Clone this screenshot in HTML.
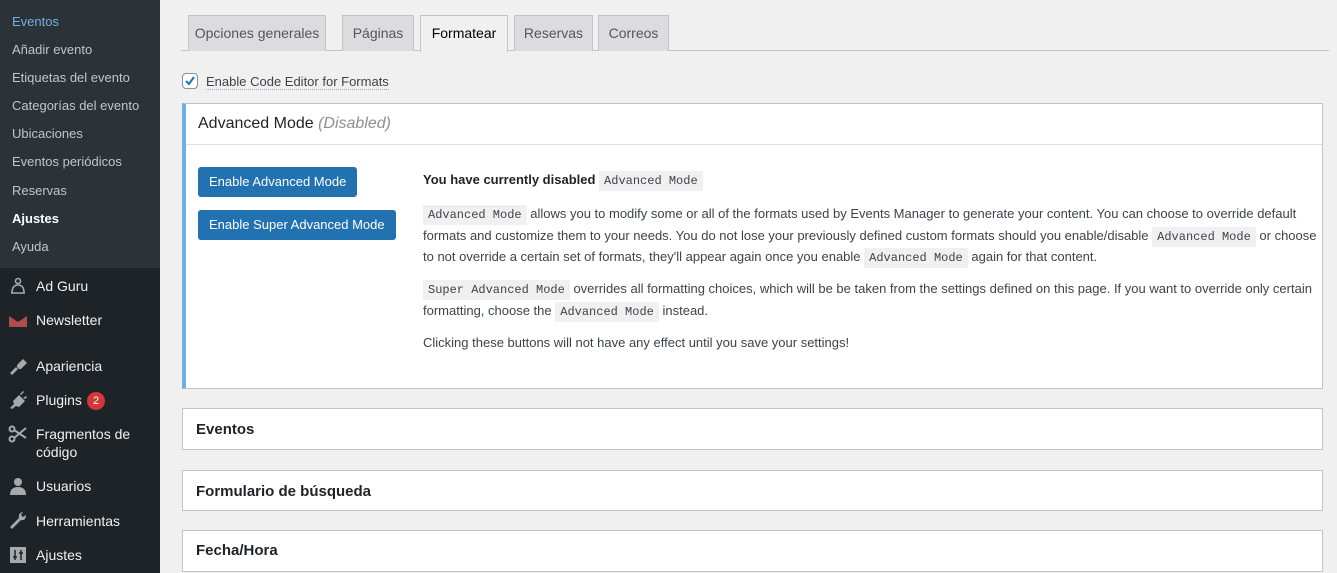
<!DOCTYPE html>
<html><head><meta charset="utf-8"><style>
*{box-sizing:border-box;margin:0;padding:0}
body{width:1337px;height:573px;overflow:hidden;background:#f0f0f1;font-family:"Liberation Sans",sans-serif;font-size:13px;color:#3c434a;position:relative}
#sb{position:absolute;left:0;top:0;width:160px;height:573px;background:#1d2327}
#sub{position:absolute;left:0;top:0;width:160px;height:268px;background:#2c3338}
.si{position:absolute;left:12px;color:#c3c4c7;font-size:13px;line-height:16px}
.mi{position:absolute;left:36px;color:#f0f0f1;font-size:14px;line-height:18px}
.ic{position:absolute;left:8px;width:20px;height:20px}
.tab{position:absolute;top:15px;height:36px;background:#dcdcde;border:1px solid #c3c4c7;border-bottom:none;font-size:14px;color:#50575e;text-align:center;line-height:34px}
.panel{position:absolute;left:182px;width:1141px;background:#fff;border:1px solid #c3c4c7}
.ph{position:absolute;left:13px;font-size:15px;font-weight:bold;color:#1d2327}
.btn{position:absolute;left:198px;height:30px;background:#2271b1;color:#fff;border-radius:3px;font-size:13px;line-height:30px;padding:0 11px}
code{font-family:"Liberation Mono",monospace;font-size:12px;background:#f0f0f1;padding:3px 5px;color:#3c434a}
.txt{position:absolute;left:423px;width:900px;line-height:20.5px;font-size:13px}
</style></head><body>
<div id="sb"><div id="sub"></div>
<div class="si" style="top:14px;color:#72aee6">Eventos</div>
<div class="si" style="top:42px">Añadir evento</div>
<div class="si" style="top:70px">Etiquetas del evento</div>
<div class="si" style="top:98px">Categorías del evento</div>
<div class="si" style="top:126px">Ubicaciones</div>
<div class="si" style="top:154px">Eventos periódicos</div>
<div class="si" style="top:183px">Reservas</div>
<div class="si" style="top:211px;color:#fff;font-weight:bold">Ajustes</div>
<div class="si" style="top:239px">Ayuda</div>
<svg class="ic" style="top:276px" viewBox="0 0 20 20" fill="none" stroke="#a7aaad" stroke-width="1.6"><circle cx="10" cy="5" r="2.5"/><path d="M4 17 Q4 9 10 9 Q16 9 16 17Z M3 17h14"/></svg>
<div class="mi" style="top:277px">Ad Guru</div>
<svg class="ic" style="top:311px" viewBox="0 0 20 20"><path d="M1 5 L10 11 L19 5 V16 H1Z" fill="#b24b4b"/></svg>
<div class="mi" style="top:311px">Newsletter</div>
<svg class="ic" style="top:356px" viewBox="0 0 20 20" fill="#a7aaad"><path d="M2 17 L8 11 L10 13 L4 19Z M9 9 L15 3 L19 7 L13 13 L11 13 L9 11Z"/></svg>
<div class="mi" style="top:357px">Apariencia</div>
<svg class="ic" style="top:390px" viewBox="0 0 20 20" fill="#a7aaad"><path d="M2 18 L6 14 L5 11 L11 5 L17 11 L11 17 L8 16 L4 19Z M12 4 L15 1 L16 2 L13 5Z M17 9 L19 7 L18 6 L15 8Z"/></svg>
<div class="mi" style="top:391px">Plugins</div>
<div style="position:absolute;left:87px;top:392px;width:18px;height:18px;border-radius:9px;background:#d63638;color:#fff;font-size:11px;text-align:center;line-height:18px">2</div>
<svg class="ic" style="top:424px" viewBox="0 0 20 20" fill="none" stroke="#a7aaad" stroke-width="2"><circle cx="4" cy="5" r="2.5"/><circle cx="4" cy="15" r="2.5"/><path d="M6 6 L18 14 M6 14 L18 4"/></svg>
<div class="mi" style="top:425px;line-height:18px">Fragmentos de<br>código</div>
<svg class="ic" style="top:476px" viewBox="0 0 20 20" fill="#a7aaad"><circle cx="10" cy="6" r="4"/><path d="M2 19 Q2 11 10 11 Q18 11 18 19Z"/></svg>
<div class="mi" style="top:477px">Usuarios</div>
<svg class="ic" style="top:511px" viewBox="0 0 20 20" fill="#a7aaad"><path d="M2 16 L11 7 Q10 2 15 1 L13 4 L15 6 L18 4 Q18 10 13 9 L4 18Z"/></svg>
<div class="mi" style="top:512px">Herramientas</div>
<svg class="ic" style="top:545px" viewBox="0 0 20 20"><rect x="2" y="2" width="16" height="16" fill="#a7aaad"/><path d="M7 5v10M13 5v10M5 12h4M11 8h4" stroke="#1d2327" stroke-width="1.5"/></svg>
<div class="mi" style="top:546px">Ajustes</div>
</div>

<div style="position:absolute;left:181px;top:50px;width:1148px;height:1px;background:#c3c4c7"></div>
<div class="tab" style="left:188px;width:138px">Opciones generales</div>
<div class="tab" style="left:342px;width:72px">Páginas</div>
<div class="tab" style="left:420px;width:88px;background:#f0f0f1;color:#000;height:37px">Formatear</div>
<div class="tab" style="left:514px;width:79px">Reservas</div>
<div class="tab" style="left:598px;width:71px">Correos</div>

<div style="position:absolute;left:182px;top:73px;width:16px;height:16px;border:1px solid #8c8f94;border-radius:4px;background:#fff"><svg width="14" height="14" viewBox="0 0 14 14" style="position:absolute;left:0;top:0"><path d="M3 7 L6 10 L11 3" fill="none" stroke="#2271b1" stroke-width="2"/></svg></div>
<div style="position:absolute;left:206px;top:74px;font-size:13px;border-bottom:1px dotted #a7aaad;line-height:15px">Enable Code Editor for Formats</div>

<div class="panel" style="top:103px;height:286px;border-left:4px solid #72aee6">
<div style="position:absolute;left:12px;top:11px;font-size:16px;color:#1d2327">Advanced Mode <i style="color:#8c8f94">(Disabled)</i></div>
<div style="position:absolute;left:0;right:0;top:40px;height:1px;background:#dcdcde"></div>
</div>
<div class="btn" style="top:167px">Enable Advanced Mode</div>
<div class="btn" style="top:210px">Enable Super Advanced Mode</div>
<div class="txt" style="top:170px;color:#1d2327"><b>You have currently disabled</b> <code>Advanced Mode</code></div>
<div class="txt" style="top:204px"><code>Advanced Mode</code> allows you to modify some or all of the formats used by Events Manager to generate your content. You can choose to override default formats and customize them to your needs. You do not lose your previously defined custom formats should you enable/disable <code>Advanced Mode</code> or choose to not override a certain set of formats, they'll appear again once you enable <code>Advanced Mode</code> again for that content.</div>
<div class="txt" style="top:279px"><code>Super Advanced Mode</code> overrides all formatting choices, which will be be taken from the settings defined on this page. If you want to override only certain formatting, choose the <code>Advanced Mode</code> instead.</div>
<div class="txt" style="top:333px">Clicking these buttons will not have any effect until you save your settings!</div>

<div class="panel" style="top:408px;height:42px"><div class="ph" style="top:12px">Eventos</div></div>
<div class="panel" style="top:470px;height:41px"><div class="ph" style="top:12px">Formulario de búsqueda</div></div>
<div class="panel" style="top:530px;height:42px"><div class="ph" style="top:11px">Fecha/Hora</div></div>
</body></html>
